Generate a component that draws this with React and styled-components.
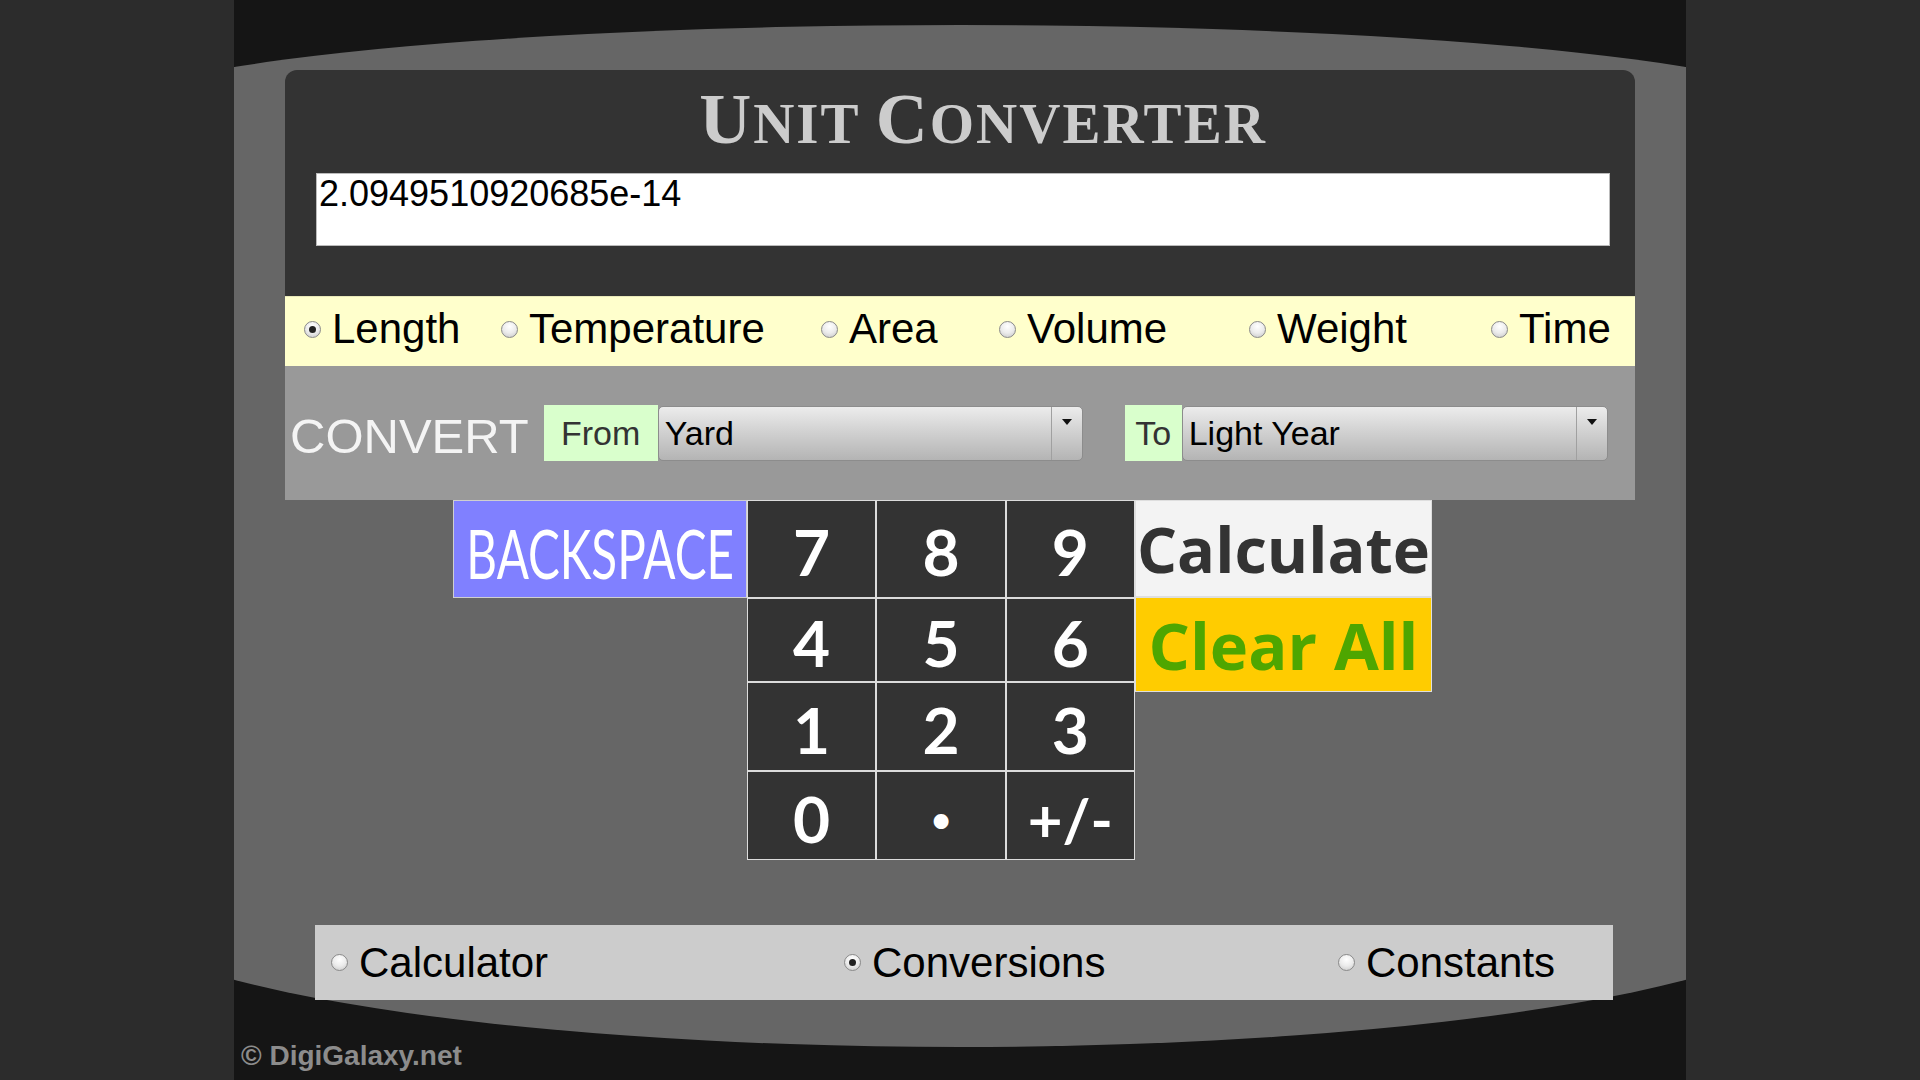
import React from "react";
import styled, { createGlobalStyle } from "styled-components";

const GlobalStyle = createGlobalStyle`
  html, body {
    margin: 0;
    padding: 0;
    background: #2c2c2c;
    overflow: hidden;
  }
`;

const Page = styled.div`
  width: 1920px;
  height: 1080px;
  background: #2c2c2c;
`;

const Frame = styled.div`
  position: relative;
  width: 1452px;
  height: 1080px;
  margin: 0 auto;
  background: #151515;
  overflow: hidden;
  display: flex;
  flex-direction: column;

  /* the big grey oval behind the panels */
  &::before {
    content: "";
    position: absolute;
    top: 25px;
    bottom: 33px;
    left: -145px;
    right: -145px;
    background: #666666;
    border-radius: 50% 50% 50% 50% / 94px 94px 150px 150px;
    z-index: 0;
  }
`;

const Inner = styled.div`
  position: relative;
  z-index: 1;
  display: flex;
  flex-direction: column;
  padding: 70px 51px 0 51px;
`;

const Header = styled.div`
  height: 226px;
  box-sizing: border-box;
  background: #333333;
  border-radius: 12px 12px 0 0;
  padding: 0 25px 0 31px;
  display: flex;
  flex-direction: column;
`;

const Title = styled.h1`
  margin: 13px 0 0 40px;
  text-align: center;
  font-family: "Liberation Serif", "DejaVu Serif", serif;
  font-weight: bold;
  font-size: 57px;
  line-height: 72px;
  letter-spacing: 2px;
  color: #cccccc;
`;

const BigCap = styled.span`
  font-size: 72px;
`;

const Readout = styled.div`
  margin-top: 13px;
  height: 73px;
  box-sizing: border-box;
  background: #ffffff;
  border: 1px solid #bbbbbb;
  padding: 0 2px;
  font-family: "Liberation Sans", Arial, sans-serif;
  font-size: 36px;
  line-height: 40px;
  color: #000;
`;

const CategoryBar = styled.div`
  height: 70px;
  background: #ffffcc;
  display: grid;
  grid-template-columns: 197px 320px 178px 250px 242px 1fr;
  align-items: center;
  padding: 0 0 5px 19px;
  border-top: 1px solid #e8e8b8;
  box-sizing: border-box;
`;

const Option = styled.label`
  display: flex;
  align-items: center;
  gap: 11px;
  font-family: "Liberation Sans", Arial, sans-serif;
  font-size: 42px;
  color: #000;
  white-space: nowrap;
`;

const Radio = styled.span`
  position: relative;
  flex: none;
  width: 17px;
  height: 17px;
  box-sizing: border-box;
  border-radius: 50%;
  border: 1px solid #8a8a8a;
  background: radial-gradient(circle at 50% 30%, #ffffff 0%, #ececec 50%, #c6c6c6 100%);

  &::after {
    content: "";
    position: absolute;
    inset: 4px;
    border-radius: 50%;
    background: #222;
    display: ${(p) => (p.$on ? "block" : "none")};
  }
`;

const ConvertRow = styled.div`
  height: 134px;
  background: #999999;
  display: flex;
  align-items: center;
  padding-left: 5px;
`;

const ConvertLabel = styled.span`
  font-family: "Liberation Sans", Arial, sans-serif;
  font-size: 49px;
  color: #f4f4f4;
  margin: 6px 15px 0 0;
`;

const Tag = styled.span`
  width: ${(p) => p.$w}px;
  height: 56px;
  flex: none;
  background: #d9ffcc;
  display: flex;
  align-items: center;
  justify-content: center;
  font-family: "Liberation Sans", Arial, sans-serif;
  font-size: 34px;
  color: #333;
`;

const SelectBox = styled.div`
  width: ${(p) => p.$w}px;
  height: 55px;
  flex: none;
  box-sizing: border-box;
  display: flex;
  border: 1px solid #8c8c8c;
  border-radius: 5px;
  background: linear-gradient(#ececec, #d2d2d2 45%, #b4b4b4);
  margin-right: ${(p) => p.$mr || 0}px;
`;

const SelectValue = styled.span`
  flex: 1;
  padding-left: 6px;
  font-family: "Liberation Sans", Arial, sans-serif;
  font-size: 34px;
  line-height: 52px;
  color: #000;
`;

const SelectArrow = styled.span`
  width: 31px;
  border-left: 1px solid #a0a0a0;
  display: flex;
  justify-content: center;
  padding-top: 12px;
  box-sizing: border-box;

  &::after {
    content: "";
    width: 0;
    height: 0;
    border-left: 5px solid transparent;
    border-right: 5px solid transparent;
    border-top: 6px solid #111;
  }
`;

const PadArea = styled.div`
  display: flex;
  align-items: flex-start;
  margin-left: 168px;
`;

const Backspace = styled.button`
  width: 294px;
  height: 98px;
  flex: none;
  border: 1px solid #cfcfcf;
  background: #8080ff;
  color: #fff;
  font-family: Lato, "Open Sans", sans-serif;
  font-size: 68px;
  padding: 6px 0 0;
  white-space: nowrap;
  display: flex;
  align-items: center;
  justify-content: center;
`;

const Squeezed = styled.span`
  display: inline-block;
  transform: scaleX(${(p) => p.$x});
  transform-origin: center;
`;

const Keypad = styled.div`
  width: 388px;
  flex: none;
  display: grid;
  grid-template-columns: repeat(3, 1fr);
  grid-template-rows: 98px 84px 89px 89px;
`;

const Key = styled.button`
  border: 1px solid #dcdcdc;
  background: #333333;
  color: #fff;
  font-family: Lato, "Open Sans", sans-serif;
  font-weight: bold;
  font-size: ${(p) => p.$size || 64}px;
  padding: 6px 0 0;
  line-height: 1;
`;

const ActionCol = styled.div`
  display: flex;
  flex-direction: column;
`;

const ActionButton = styled.button`
  width: 297px;
  height: ${(p) => p.$h}px;
  border: 1px solid #dedede;
  background: ${(p) => p.$bg};
  color: ${(p) => p.$fg};
  font-family: "Open Sans", Lato, sans-serif;
  font-weight: bold;
  font-size: ${(p) => p.$size}px;
  padding: 0;
  overflow: hidden;
  white-space: nowrap;
  display: flex;
  align-items: center;
  justify-content: center;
`;

const ModeBar = styled.div`
  margin: 65px 0 0 30px;
  width: 1298px;
  height: 75px;
  background: #cccccc;
  display: grid;
  grid-template-columns: 513px 494px 1fr;
  align-items: center;
  padding-left: 16px;
  box-sizing: border-box;
`;

const Footer = styled.div`
  position: relative;
  z-index: 1;
  margin-top: auto;
  padding: 0 0 8px 7px;
  font-family: "Liberation Sans", Arial, sans-serif;
  font-weight: bold;
  font-size: 28px;
  color: #8c8c8c;
`;

const categories = [
  { name: "Length", on: true },
  { name: "Temperature" },
  { name: "Area" },
  { name: "Volume" },
  { name: "Weight" },
  { name: "Time" },
];

const keys = [
  ["7"], ["8"], ["9"],
  ["4"], ["5"], ["6"],
  ["1"], ["2"], ["3"],
  ["0"], ["•", 34], ["+/-", 60],
];

const modes = [
  { name: "Calculator" },
  { name: "Conversions", on: true },
  { name: "Constants" },
];

export default function App() {
  return (
    <Page>
      <GlobalStyle />
      <Frame>
        <Inner>
          <Header>
            <Title>
              <BigCap>U</BigCap>NIT <BigCap>C</BigCap>ONVERTER
            </Title>
            <Readout>2.0949510920685e-14</Readout>
          </Header>

          <CategoryBar>
            {categories.map((c) => (
              <Option key={c.name}>
                <Radio $on={c.on} />
                {c.name}
              </Option>
            ))}
          </CategoryBar>

          <ConvertRow>
            <ConvertLabel>CONVERT</ConvertLabel>
            <Tag $w={114}>From</Tag>
            <SelectBox $w={425} $mr={42}>
              <SelectValue>Yard</SelectValue>
              <SelectArrow />
            </SelectBox>
            <Tag $w={57}>To</Tag>
            <SelectBox $w={426}>
              <SelectValue>Light Year</SelectValue>
              <SelectArrow />
            </SelectBox>
          </ConvertRow>

          <PadArea>
            <Backspace>
              <Squeezed $x={0.7}>BACKSPACE</Squeezed>
            </Backspace>
            <Keypad>
              {keys.map(([k, size]) => (
                <Key key={k} $size={size}>
                  {k}
                </Key>
              ))}
            </Keypad>
            <ActionCol>
              <ActionButton $h={97} $size={63} $bg="#f3f3f3" $fg="#333">
                Calculate
              </ActionButton>
              <ActionButton $h={95} $size={65} $bg="#ffcc00" $fg="#4ea600">
                Clear All
              </ActionButton>
            </ActionCol>
          </PadArea>

          <ModeBar>
            {modes.map((m) => (
              <Option key={m.name}>
                <Radio $on={m.on} />
                {m.name}
              </Option>
            ))}
          </ModeBar>
        </Inner>
        <Footer>© DigiGalaxy.net</Footer>
      </Frame>
    </Page>
  );
}
